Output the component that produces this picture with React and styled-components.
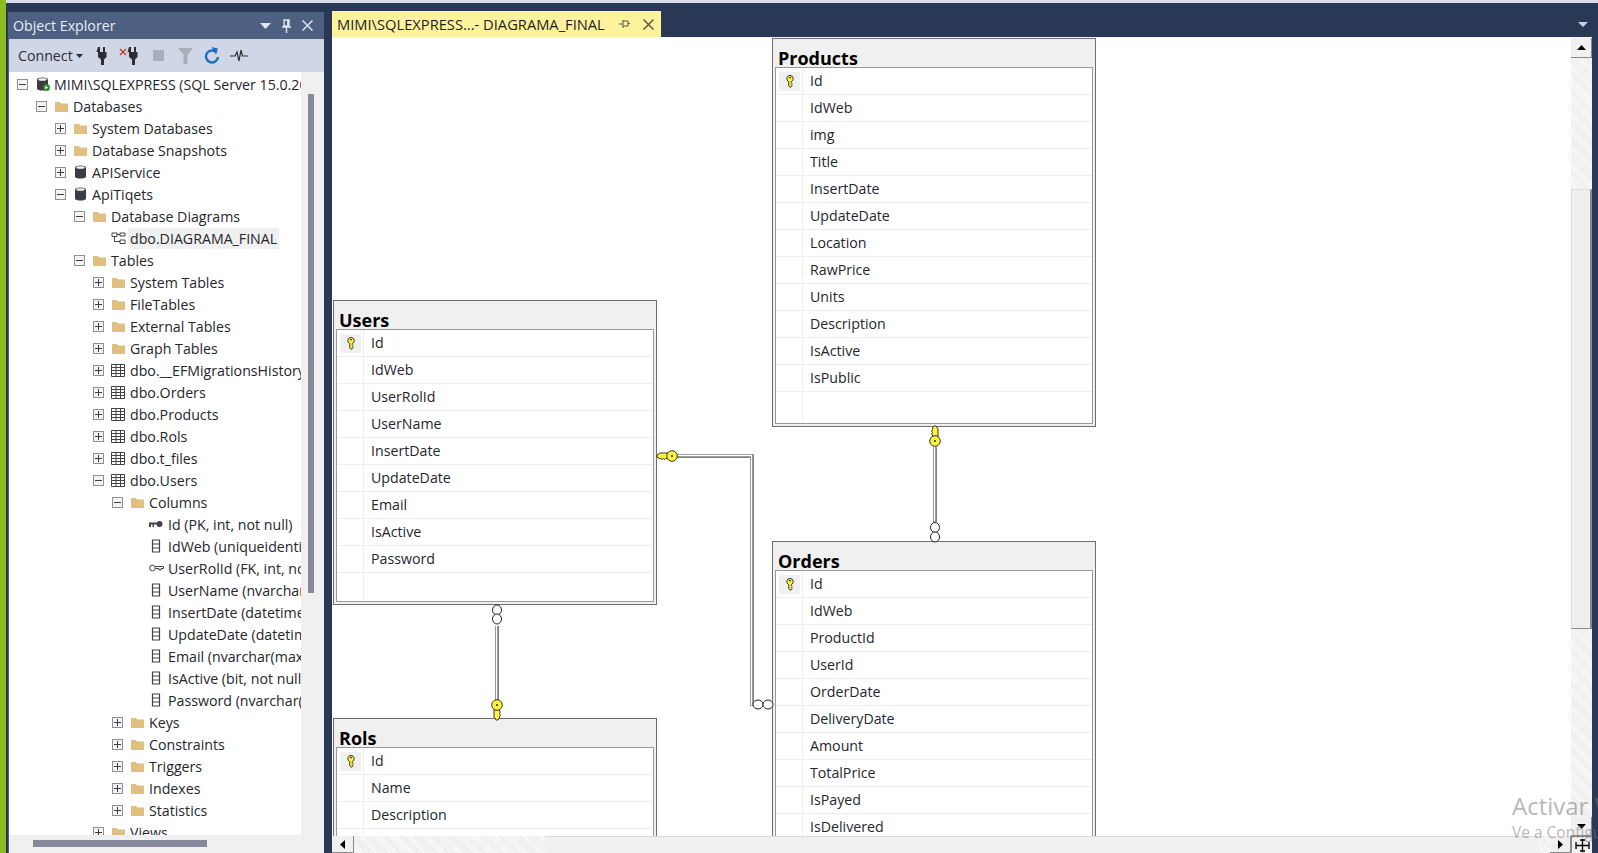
import React from "react";
import styled, { createGlobalStyle } from "styled-components";

const FONT = `"Open Sans", "Noto Sans", "Liberation Sans", sans-serif`;

const tree = [
  { level: 0, exp: "-", icon: "server", text: "MIMI\\SQLEXPRESS (SQL Server 15.0.2000 - sa)" },
  { level: 1, exp: "-", icon: "folder", text: "Databases" },
  { level: 2, exp: "+", icon: "folder", text: "System Databases" },
  { level: 2, exp: "+", icon: "folder", text: "Database Snapshots" },
  { level: 2, exp: "+", icon: "db", text: "APIService" },
  { level: 2, exp: "-", icon: "db", text: "ApiTiqets" },
  { level: 3, exp: "-", icon: "folder", text: "Database Diagrams" },
  { level: 4, icon: "diagram", text: "dbo.DIAGRAMA_FINAL", selected: true },
  { level: 3, exp: "-", icon: "folder", text: "Tables" },
  { level: 4, exp: "+", icon: "folder", text: "System Tables" },
  { level: 4, exp: "+", icon: "folder", text: "FileTables" },
  { level: 4, exp: "+", icon: "folder", text: "External Tables" },
  { level: 4, exp: "+", icon: "folder", text: "Graph Tables" },
  { level: 4, exp: "+", icon: "table", text: "dbo.__EFMigrationsHistory" },
  { level: 4, exp: "+", icon: "table", text: "dbo.Orders" },
  { level: 4, exp: "+", icon: "table", text: "dbo.Products" },
  { level: 4, exp: "+", icon: "table", text: "dbo.Rols" },
  { level: 4, exp: "+", icon: "table", text: "dbo.t_files" },
  { level: 4, exp: "-", icon: "table", text: "dbo.Users" },
  { level: 5, exp: "-", icon: "folder", text: "Columns" },
  { level: 6, icon: "pk", text: "Id (PK, int, not null)" },
  { level: 6, icon: "column", text: "IdWeb (uniqueidentifier, not null)" },
  { level: 6, icon: "fk", text: "UserRolId (FK, int, not null)" },
  { level: 6, icon: "column", text: "UserName (nvarchar(max), null)" },
  { level: 6, icon: "column", text: "InsertDate (datetime2(7), not null)" },
  { level: 6, icon: "column", text: "UpdateDate (datetime2(7), not null)" },
  { level: 6, icon: "column", text: "Email (nvarchar(max), null)" },
  { level: 6, icon: "column", text: "IsActive (bit, not null)" },
  { level: 6, icon: "column", text: "Password (nvarchar(max), null)" },
  { level: 5, exp: "+", icon: "folder", text: "Keys" },
  { level: 5, exp: "+", icon: "folder", text: "Constraints" },
  { level: 5, exp: "+", icon: "folder", text: "Triggers" },
  { level: 5, exp: "+", icon: "folder", text: "Indexes" },
  { level: 5, exp: "+", icon: "folder", text: "Statistics" },
  { level: 4, exp: "+", icon: "folder", text: "Views" },
];

const diagramTables = [
  {
    name: "Products", x: 440, y: 0, blank: 31,
    columns: ["Id", "IdWeb", "img", "Title", "InsertDate", "UpdateDate", "Location", "RawPrice", "Units", "Description", "IsActive", "IsPublic"],
  },
  {
    name: "Users", x: 1, y: 262, blank: 28,
    columns: ["Id", "IdWeb", "UserRolId", "UserName", "InsertDate", "UpdateDate", "Email", "IsActive", "Password"],
  },
  {
    name: "Orders", x: 440, y: 503,
    columns: ["Id", "IdWeb", "ProductId", "UserId", "OrderDate", "DeliveryDate", "Amount", "TotalPrice", "IsPayed", "IsDelivered"],
  },
  {
    name: "Rols", x: 1, y: 680, blank: 60,
    columns: ["Id", "Name", "Description"],
  },
];

const GlobalStyle = createGlobalStyle`
  html, body {
    margin: 0;
    padding: 0;
    height: 100%;
    overflow: hidden;
  }
  body {
    font-family: ${FONT};
  }
`;

const Screen = styled.div`
  width: 1598px;
  height: 853px;
  display: flex;
  flex-direction: column;
  background: #293955;
  overflow: hidden;
  position: relative;
`;

const TopStrip = styled.div`
  height: 3px;
  background: #d6dbe9;
  margin-left: 6px;
`;

const Body = styled.div`
  flex: 1;
  display: flex;
  min-height: 0;
`;

const GreenEdge = styled.div`
  width: 6px;
  margin-top: -3px;
  background: #8cbc20;
`;

const ExplorerPanel = styled.section`
  width: 315px;
  margin: 9px 0 0 2px;
  display: flex;
  flex-direction: column;
  background: #f0f0f0;
  border-left: 1px solid #4d6082;
`;

const PanelHeader = styled.header`
  height: 27px;
  display: flex;
  align-items: center;
  justify-content: space-between;
  padding: 0 11px 0 4px;
  background: #4d6082;
  color: #e8ecf4;
  font-size: 14.2px;
`;

const HeaderTools = styled.div`
  display: flex;
  align-items: center;
  gap: 10px;
`;

const Toolbar = styled.div`
  height: 33px;
  display: flex;
  align-items: center;
  padding-left: 9px;
  background: #cfd6e5;
  color: #2d2d33;
  font-size: 14.2px;
`;

const ConnectLabel = styled.span`
  margin-right: 3px;
`;

const ConnectArrow = styled.svg`
  margin-right: 6px;
`;

const ToolButton = styled.span`
  width: ${(p) => p.$w || 27}px;
  height: 24px;
  display: flex;
  align-items: center;
  justify-content: center;
`;

const TreeArea = styled.div`
  flex: 1;
  display: flex;
  min-height: 0;
  background: #f0f0f0;
`;

const TreeClip = styled.div`
  width: 292px;
  padding-top: 1px;
  background: #ffffff;
  overflow: hidden;
`;

const TreeRow = styled.div`
  height: 22px;
  display: flex;
  align-items: center;
  padding-left: ${(p) => 8 + p.$level * 19}px;
  color: #26262b;
  font-size: 14.2px;
  white-space: nowrap;
`;

const Expander = styled.span`
  flex: none;
  width: 11px;
  height: 11px;
  box-sizing: border-box;
  margin-right: 6px;
  border: 1px solid #8f8f96;
  background: #f4f4f4;
  position: relative;
  visibility: ${(p) => (p.$kind ? "visible" : "hidden")};

  &::before {
    content: "";
    position: absolute;
    left: 1px;
    right: 1px;
    top: 4px;
    height: 1px;
    background: #3c3c42;
  }

  &::after {
    content: "";
    display: ${(p) => (p.$kind === "+" ? "block" : "none")};
    position: absolute;
    top: 1px;
    bottom: 1px;
    left: 4px;
    width: 1px;
    background: #3c3c42;
  }
`;

const NodeIcon = styled.span`
  flex: none;
  width: 16px;
  height: 16px;
  margin-right: 2px;
  display: flex;
  align-items: center;
  justify-content: center;
`;

const NodeLabel = styled.span`
  padding: 0 2px;
  line-height: 21px;
  background: ${(p) => (p.$selected ? "#f0f0f0" : "transparent")};
`;

const TreeScrollTrack = styled.div`
  width: 20px;
  padding: 22px 0 0 7px;
  box-sizing: border-box;
`;

const TreeScrollThumb = styled.div`
  width: 6px;
  height: 499px;
  background: #868999;
`;

const TreeHScroll = styled.div`
  height: 18px;
  padding: 5px 0 0 24px;
  box-sizing: border-box;
  background: #f0f0f0;
`;

const TreeHThumb = styled.div`
  width: 174px;
  height: 7px;
  background: #868999;
`;

const DocumentArea = styled.main`
  width: 1260px;
  margin: 8px 0 0 8px;
  display: flex;
  flex-direction: column;
  min-width: 0;
`;

const TabStrip = styled.div`
  height: 26px;
  flex: none;
  display: flex;
  align-items: stretch;
`;

const DocTab = styled.div`
  width: 329px;
  display: flex;
  align-items: center;
  gap: 14px;
  padding-left: 5px;
  box-sizing: border-box;
  background: #fff29d;
  color: #1e1e1e;
  font-size: 14.7px;
  white-space: nowrap;
`;

const TabTools = styled.span`
  display: flex;
  align-items: center;
  gap: 13px;
`;

const EditorFrame = styled.div`
  flex: 1;
  display: grid;
  grid-template-columns: 1fr 21px;
  grid-template-rows: 1fr 17px;
  min-height: 0;
  background: #ffffff;
  border-top: 1px solid #fff8d8;
`;

const Canvas = styled.div`
  position: relative;
  overflow: hidden;
  background: #ffffff;
`;

const TableBox = styled.div`
  position: absolute;
  left: ${(p) => p.$x}px;
  top: ${(p) => p.$y}px;
  width: 324px;
  box-sizing: border-box;
  padding: 0 2px 2px;
  background: #f0f0f0;
  border: 1px solid #6e6e6e;
`;

const TableTitle = styled.div`
  height: 28px;
  padding-left: 3px;
  color: #000000;
  font-size: 18px;
  font-weight: 700;
  line-height: 38px;
  overflow: hidden;
`;

const ColumnGrid = styled.div`
  background: #ffffff;
  border: 1px solid #9a9a9a;
`;

const ColumnRow = styled.div`
  height: 27px;
  box-sizing: border-box;
  display: flex;
  border-bottom: 1px solid #eeeeee;
  color: #26262b;
  font-size: 14.2px;
`;

const KeyCell = styled.div`
  width: 26px;
  flex: none;
  box-sizing: content-box;
  border-right: 1px solid #eeeeee;
  display: flex;
  align-items: center;
`;

const KeyMarker = styled.span`
  width: 21px;
  height: 19px;
  margin-left: 3px;
  display: flex;
  align-items: center;
  justify-content: center;
  background: #f0f0f0;
`;

const ColumnName = styled.div`
  padding-left: 7px;
  line-height: 26px;
`;

const BlankRow = styled.div`
  height: ${(p) => p.$height}px;
  display: flex;
`;

const BlankKey = styled.div`
  width: 26px;
  border-right: 1px solid #eeeeee;
`;

const Connectors = styled.svg`
  position: absolute;
  left: 0;
  top: 0;
  pointer-events: none;
`;

const ScrollV = styled.div`
  display: flex;
  flex-direction: column;
  background: #f7f7f7;
  background-image: repeating-linear-gradient(45deg, #ececec 0 1px, #fafafa 1px 2px);
`;

const ScrollH = styled.div`
  display: flex;
  background: #f7f7f7;
  background-image: repeating-linear-gradient(45deg, #ececec 0 1px, #fafafa 1px 2px);
`;

const ScrollButton = styled.div`
  flex: none;
  width: ${(p) => p.$w || 21}px;
  height: ${(p) => p.$h || 17}px;
  box-sizing: border-box;
  display: flex;
  align-items: center;
  justify-content: center;
  background: #f0f0f0;
  border-right: 1px solid #8a8a8a;
  border-bottom: 1px solid #8a8a8a;
`;

const ScrollThumbV = styled.div`
  height: ${(p) => p.$h}px;
  margin-top: ${(p) => p.$top}px;
  box-sizing: border-box;
  background: #eeeeee;
  border-top: 1px solid #dcdcdc;
  border-left: 1px solid #dcdcdc;
  border-right: 2px solid #8a8a8a;
  border-bottom: 1px solid #8a8a8a;
`;

const ScrollThumbH = styled.div`
  width: ${(p) => p.$w}px;
  margin-left: ${(p) => p.$left}px;
  background: #f0f0f0;
  border-top: 1px solid #dcdcdc;
`;

const Spacer = styled.div`
  flex: 1;
`;

const Corner = styled.div`
  background: #f0f0f0;
  border: 1px solid #8a8a8a;
  border-right: none;
  border-bottom: none;
  display: flex;
  align-items: center;
  justify-content: center;
`;

const DropArrow = styled.div`
  position: absolute;
  top: 22px;
  left: 1578px;
  width: 0;
  height: 0;
  border-left: 5px solid transparent;
  border-right: 5px solid transparent;
  border-top: 5px solid #c8d0e4;
`;

const Watermark = styled.div`
  position: absolute;
  left: 1512px;
  top: 790px;
  color: rgba(120, 120, 120, 0.55);
  white-space: nowrap;
  pointer-events: none;
`;

const WatermarkTitle = styled.div`
  font-size: 24px;
  line-height: 32px;
`;

const WatermarkSub = styled.div`
  font-size: 15.5px;
  line-height: 20px;
`;

const FolderIcon = () => (
  <svg width="15" height="13" viewBox="0 0 15 13">
    <path d="M1 2h5l1 1.5h7V12H1z" fill="#e0bf80" />
  </svg>
);

const CylinderIcon = ({ badge }) => (
  <svg width="15" height="16" viewBox="0 0 15 16">
    <path d="M2 3.5C2 .8 13 .8 13 3.5v9c0 2.7-11 2.7-11 0z" fill="#3c3c42" />
    <ellipse cx="7.5" cy="3.5" rx="4.3" ry="1.3" fill="#f4f4f4" />
    {badge && <circle cx="11.5" cy="11.5" r="3.5" fill="#388a34" />}
    {badge && <path d="M10.3 9.8v3.4l2.8-1.7z" fill="#fff" />}
  </svg>
);

const TableIcon = () => (
  <svg width="14" height="13" viewBox="0 0 14 13" fill="none" stroke="#424248">
    <path d="M.5.5h13v12H.5z" />
    <path d="M.5 3.5h13M.5 6.5h13M.5 9.5h13M5 .5v12M9.5 .5v12" />
  </svg>
);

const DiagramIcon = () => (
  <svg width="15" height="13" viewBox="0 0 15 13" fill="none" stroke="#424248">
    <path d="M1 1h5v3.5H1zM9 8h5v3.5H9zM9 1h5v3H9zM6 2.5h3M3.5 4.5v5H9" />
  </svg>
);

const ColumnIcon = () => (
  <svg width="10" height="14" viewBox="0 0 10 14" fill="none" stroke="#424248" strokeWidth="1.2">
    <path d="M1.5 1h7v12h-7zM1.5 5h7M1.5 9h7" />
  </svg>
);

const PkIcon = () => (
  <svg width="14" height="8" viewBox="0 0 14 8">
    <circle cx="10.5" cy="4" r="3" fill="#424248" />
    <path d="M0 2.5h9v2H5V7H3.500V4.500H2V7H0z" fill="#424248" />
  </svg>
);

const FkIcon = () => (
  <svg width="15" height="8" viewBox="0 0 15 8" fill="none" stroke="#424248">
    <circle cx="3.5" cy="4" r="2.8" />
    <path d="M6.5 2.5h8v2H12V6h-2V4.500H6.500" />
  </svg>
);

const nodeIcons = {
  server: <CylinderIcon badge />,
  folder: <FolderIcon />,
  db: <CylinderIcon />,
  table: <TableIcon />,
  diagram: <DiagramIcon />,
  column: <ColumnIcon />,
  pk: <PkIcon />,
  fk: <FkIcon />,
};

const PlugIcon = ({ cross }) => (
  <svg width="24" height="20" viewBox={cross ? "0 0 24 20" : "3 0 24 20"}>
    {cross && <path d="M1 3l6 6M7 3l-6 6" stroke="#c8342c" strokeWidth="1.3" />}
    <path d="M10 1h2v5h3V1h2v5h1.500v5L16 13.500V19h-3v-5.500L10 11V6H8.500z" fill="#2d2d33" />
  </svg>
);

const YellowKey = () => (
  <svg width="8" height="13" viewBox="0 0 9 15">
    <path d="M4.500.5A3.700 3.700 0 0 1 6 7.600V9l1 1-1 1 1 1-1.500 2h-1L3 12.500V7.600A3.700 3.700 0 0 1 4.500.5z" fill="#fff23a" stroke="#222" />
    <circle cx="4.500" cy="3" r="1" fill="#222" />
  </svg>
);

const ConnectorKey = ({ x, y, angle }) => (
  <g transform={`translate(${x} ${y}) rotate(${angle})`} fill="#fff23a" stroke="#222" strokeWidth="0.9">
    <path d="M-15 -1L-12 -3H-4V2.500H-6L-7 3.500L-8.500 2.500L-10 3.500L-11.500 2.500H-13L-15 1z" />
    <circle r="5.3" />
    <circle r="1" fill="#222" stroke="none" />
  </g>
);

const ConnectorLine = ({ d }) => (
  <g fill="none">
    <path d={d} stroke="#808080" strokeWidth="4" />
    <path d={d} stroke="#ffffff" strokeWidth="1.4" transform="translate(-0.5 -0.5)" />
  </g>
);

const Ring = ({ cx, cy, rx = 4.5, ry = 5 }) => (
  <ellipse cx={cx} cy={cy} rx={rx} ry={ry} fill="#fff" stroke="#222" />
);

const DiagramLines = () => (
  <Connectors width="1238" height="798" viewBox="0 0 1238 798">
    <ConnectorLine d="M345 418H420V668" />
    <ConnectorLine d="M603 409V484" />
    <ConnectorLine d="M165 588V662" />
    <Ring cx={426} cy={666.5} rx={5} ry={4.5} />
    <Ring cx={436} cy={666.5} rx={5} ry={4.5} />
    <Ring cx={603} cy={489.5} />
    <Ring cx={603} cy={499} />
    <Ring cx={165} cy={572} />
    <Ring cx={165} cy={581} />
    <ConnectorKey x={340} y={418} angle={0} />
    <ConnectorKey x={603} y={403} angle={90} />
    <ConnectorKey x={165} y={667} angle={-90} />
  </Connectors>
);

const DiagramTable = ({ table }) => (
  <TableBox $x={table.x} $y={table.y}>
    <TableTitle>{table.name}</TableTitle>
    <ColumnGrid>
      {table.columns.map((col, index) => (
        <ColumnRow key={col}>
          <KeyCell>
            {index === 0 && (
              <KeyMarker>
                <YellowKey />
              </KeyMarker>
            )}
          </KeyCell>
          <ColumnName>{col}</ColumnName>
        </ColumnRow>
      ))}
      {table.blank && (
        <BlankRow $height={table.blank}>
          <BlankKey />
        </BlankRow>
      )}
    </ColumnGrid>
  </TableBox>
);

const App = () => {
  return (
    <Screen>
      <GlobalStyle />
      <TopStrip />
      <Body>
        <GreenEdge />
        <ExplorerPanel>
          <PanelHeader>
            <span>Object Explorer</span>
            <HeaderTools>
              <svg width="11" height="6" viewBox="0 0 11 6"><path d="M0 0h11L5.500 6z" fill="#dfe4ef" /></svg>
              <svg width="11" height="14" viewBox="0 0 11 14" fill="none" stroke="#dfe4ef" strokeWidth="1.4"><path d="M3 1h5v6H3zM1 8h9M5.500 8v6M6.800 1v6" /></svg>
              <svg width="11" height="11" viewBox="0 0 11 11" stroke="#dfe4ef" strokeWidth="1.5"><path d="M.5.500l10 10M10.500.500l-10 10" /></svg>
            </HeaderTools>
          </PanelHeader>
          <Toolbar>
            <ConnectLabel>Connect</ConnectLabel>
            <ConnectArrow width="7" height="4" viewBox="0 0 7 4"><path d="M0 0h7L3.500 4z" fill="#2d2d33" /></ConnectArrow>
            <ToolButton $w={29}><PlugIcon /></ToolButton>
            <ToolButton><PlugIcon cross /></ToolButton>
            <ToolButton>
              <svg width="11" height="11"><rect width="11" height="11" fill="#a9aebb" /></svg>
            </ToolButton>
            <ToolButton>
              <svg width="15" height="16" viewBox="0 0 15 16"><path d="M0 0h15L9.500 7v9h-4V7z" fill="#a9aebb" /></svg>
            </ToolButton>
            <ToolButton>
              <svg width="16" height="17" viewBox="0 0 16 17" fill="none"><path d="M12.500 5.500A6 6 0 1 0 14 10" stroke="#1c6fc0" strokeWidth="2.4" /><path d="M7.500 0L14 1.500l-2 6z" fill="#1c6fc0" /></svg>
            </ToolButton>
            <ToolButton>
              <svg width="18" height="14" viewBox="0 0 18 14" fill="none" stroke="#2d2d33" strokeWidth="1.2"><path d="M0 7h5l2-4 2 9 2-11 1.500 6H18" /></svg>
            </ToolButton>
          </Toolbar>
          <TreeArea>
            <TreeClip>
              {tree.map((node) => (
                <TreeRow key={node.text} $level={node.level}>
                  <Expander $kind={node.exp} />
                  <NodeIcon>{nodeIcons[node.icon]}</NodeIcon>
                  <NodeLabel $selected={node.selected}>{node.text}</NodeLabel>
                </TreeRow>
              ))}
            </TreeClip>
            <TreeScrollTrack>
              <TreeScrollThumb />
            </TreeScrollTrack>
          </TreeArea>
          <TreeHScroll>
            <TreeHThumb />
          </TreeHScroll>
        </ExplorerPanel>
        <DocumentArea>
          <TabStrip>
            <DocTab>
              <span>MIMI\SQLEXPRESS...- DIAGRAMA_FINAL</span>
              <TabTools>
                <svg width="11" height="10" viewBox="0 0 11 10" fill="none" stroke="#5c5a3c"><path d="M0 5h4M4 1v8M4 2h5v5H4M9 4.500h2" /></svg>
                <svg width="11" height="11" viewBox="0 0 11 11" stroke="#5c5a3c" strokeWidth="1.5"><path d="M.5.500l10 10M10.500.500l-10 10" /></svg>
              </TabTools>
            </DocTab>
          </TabStrip>
          <EditorFrame>
            <Canvas>
              {diagramTables.map((table) => (
                <DiagramTable key={table.name} table={table} />
              ))}
              <DiagramLines />
            </Canvas>
            <ScrollV>
              <ScrollButton $h={20}>
                <svg width="9" height="5"><path d="M0 5h9L4.500 0z" fill="#000" /></svg>
              </ScrollButton>
              <ScrollThumbV $top={131} $h={440} />
              <Spacer />
              <ScrollButton $h={19}>
                <svg width="9" height="5"><path d="M0 0h9L4.500 5z" fill="#000" /></svg>
              </ScrollButton>
            </ScrollV>
            <ScrollH>
              <ScrollButton $w={22} $h={17}>
                <svg width="5" height="9"><path d="M5 0v9L0 4.500z" fill="#000" /></svg>
              </ScrollButton>
              <ScrollThumbH $left={191} $w={992} />
              <Spacer />
              <ScrollButton $w={21} $h={17}>
                <svg width="5" height="9"><path d="M0 0v9l5-4.500z" fill="#000" /></svg>
              </ScrollButton>
            </ScrollH>
            <Corner>
              <svg width="17" height="15" viewBox="0 0 17 15" fill="none" stroke="#000" strokeWidth="1.3"><path d="M8.500 1v13M2 7.500h13M2 4v7M15 4v7M6 2h5M6 13h5" /></svg>
            </Corner>
          </EditorFrame>
        </DocumentArea>
      </Body>
      <DropArrow />
      <Watermark>
        <WatermarkTitle>Activar Windows</WatermarkTitle>
        <WatermarkSub>Ve a Configuración</WatermarkSub>
      </Watermark>
    </Screen>
  );
};

export default App;
